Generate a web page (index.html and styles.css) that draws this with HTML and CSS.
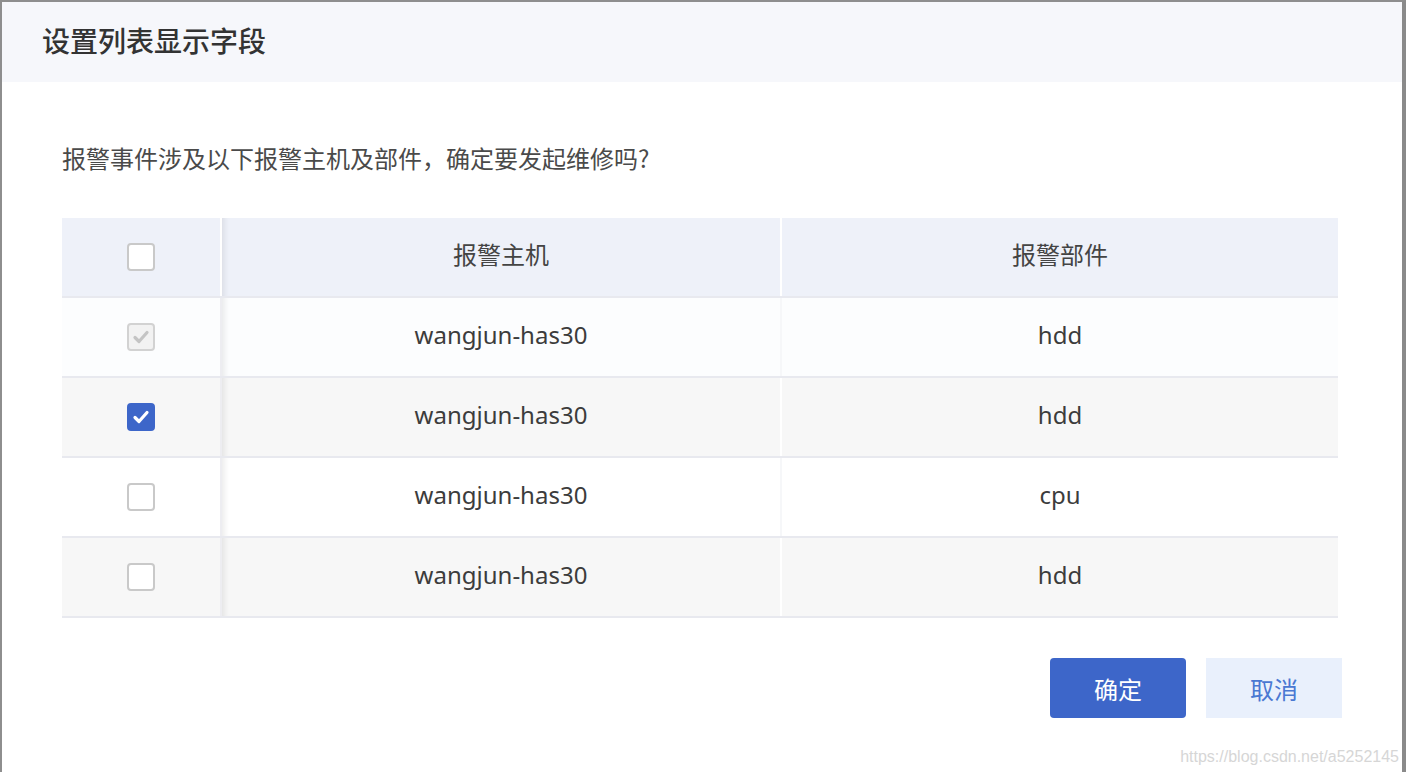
FILE: index.html
```html
<!DOCTYPE html>
<html lang="zh-CN">
<head>
<meta charset="utf-8">
<title>设置列表显示字段</title>
<link rel="stylesheet" href="styles.css">
</head>
<body>
<div class="frame">
  <div class="dialog">
    <div class="dialog-header">
      <h1 class="dialog-title">设置列表显示字段</h1>
    </div>
    <div class="dialog-body">
      <p class="message">报警事件涉及以下报警主机及部件，确定要发起维修吗?</p>
      <div class="table">
        <div class="row head">
          <div class="cell sel"><span class="cb"></span></div>
          <div class="cell host">报警主机</div>
          <div class="cell part">报警部件</div>
        </div>
        <div class="row odd">
          <div class="cell sel"><span class="cb disabled"><svg viewBox="0 0 28 28" class="tick"><path d="M8 14.5 L12 18.5 L20 9.5"/></svg></span></div>
          <div class="cell host">wangjun-has30</div>
          <div class="cell part">hdd</div>
        </div>
        <div class="row even">
          <div class="cell sel"><span class="cb checked"><svg viewBox="0 0 28 28" class="tick"><path d="M8 14.5 L12 18.5 L20 9.5"/></svg></span></div>
          <div class="cell host">wangjun-has30</div>
          <div class="cell part">hdd</div>
        </div>
        <div class="row odd white">
          <div class="cell sel"><span class="cb"></span></div>
          <div class="cell host">wangjun-has30</div>
          <div class="cell part">cpu</div>
        </div>
        <div class="row even">
          <div class="cell sel"><span class="cb"></span></div>
          <div class="cell host">wangjun-has30</div>
          <div class="cell part">hdd</div>
        </div>
      </div>
      <div class="footer">
        <button class="btn primary">确定</button>
        <button class="btn secondary">取消</button>
      </div>
    </div>
  </div>
  <div class="watermark">https://blog.csdn.net/a5252145</div>
</div>
</body>
</html>
```

FILE: styles.css
```css
html, body {
  margin: 0;
  padding: 0;
  background: #ffffff;
}

body {
  font-family: "Noto Sans", "Noto Sans CJK SC", sans-serif;
  color: #333333;
}

.frame {
  position: relative;
  width: 1406px;
  height: 772px;
  box-sizing: border-box;
  border-top: 2px solid #8e8e8e;
  border-left: 2px solid #8e8e8e;
  border-right: 4px solid #8a8a8a;
  overflow: hidden;
}

.dialog {
  display: flex;
  flex-direction: column;
  height: 100%;
}

.dialog-header {
  height: 80px;
  box-sizing: border-box;
  background: #f6f7fb;
  display: flex;
  align-items: center;
  padding-left: 40px;
  padding-bottom: 4px;
}

.dialog-title {
  margin: 0;
  font-family: "Noto Sans CJK SC", sans-serif;
  font-size: 28px;
  font-weight: 500;
  color: #333333;
}

.dialog-body {
  padding: 0 60px 0 60px;
}

.message {
  margin: 60px 0 0 0;
  font-family: "Noto Sans CJK SC", sans-serif;
  font-size: 24px;
  line-height: 32px;
  color: #4a4a4a;
}

.table {
  margin-top: 44px;
  width: 1276px;
}

.row {
  display: grid;
  grid-template-columns: 160px 560px 556px;
  height: 80px;
  box-sizing: border-box;
  border-bottom: 2px solid #e8e9ef;
}

.row.head {
  background: #eef1f9;
}

.row.odd {
  background: #fcfdfe;
}

.row.even {
  background: #f7f7f7;
}

.row.white {
  background: #ffffff;
}

.cell {
  display: flex;
  align-items: center;
  justify-content: center;
  font-size: 24px;
  color: #3c3c3c;
  box-sizing: border-box;
}

.cell.host,
.cell.part {
  padding-bottom: 6px;
}

.head .cell {
  font-family: "Noto Sans CJK SC", sans-serif;
  color: #444444;
}

.head .cell.host,
.head .cell.part {
  padding-bottom: 8px;
}

.cell.sel {
  border-right: 2px solid #ededf1;
}

.head .cell.sel {
  border-right: 2px solid #ffffff;
}

.cell.host {
  border-right: 2px solid #ffffff;
  box-shadow: inset 8px 0 6px -6px rgba(0, 0, 0, 0.09);
}

.row.odd .cell.host {
  border-right-color: #f6f7f9;
}

.cb {
  width: 28px;
  height: 28px;
  box-sizing: border-box;
  border: 2px solid #c9c9c9;
  border-radius: 4px;
  background: #ffffff;
  display: flex;
  align-items: center;
  justify-content: center;
}

.cb .tick {
  width: 28px;
  height: 28px;
  flex: none;
}

.cb .tick path {
  fill: none;
  stroke-width: 3.2;
  stroke-linecap: round;
  stroke-linejoin: round;
}

.cb.disabled {
  background: #f2f2f2;
  border-color: #d2d2d2;
}

.cb.disabled .tick path {
  stroke: #c4c4c4;
}

.cb.checked {
  background: #3d66c9;
  border-color: #3d66c9;
}

.cb.checked .tick path {
  stroke: #ffffff;
}

.footer {
  display: flex;
  justify-content: flex-end;
  gap: 20px;
  margin-top: 40px;
  width: 1280px;
}

.btn {
  width: 136px;
  height: 60px;
  border: none;
  font-family: "Noto Sans CJK SC", sans-serif;
  font-size: 24px;
  padding: 0;
  cursor: pointer;
}

.btn.primary {
  background: #3d66c9;
  color: #ffffff;
  border-radius: 4px;
}

.btn.secondary {
  background: #e9f0fc;
  color: #4a78d2;
  border-radius: 0;
}

.watermark {
  position: absolute;
  right: 3px;
  bottom: 6px;
  font-family: "Liberation Sans", sans-serif;
  font-size: 16px;
  color: #d6d6d6;
}
```
